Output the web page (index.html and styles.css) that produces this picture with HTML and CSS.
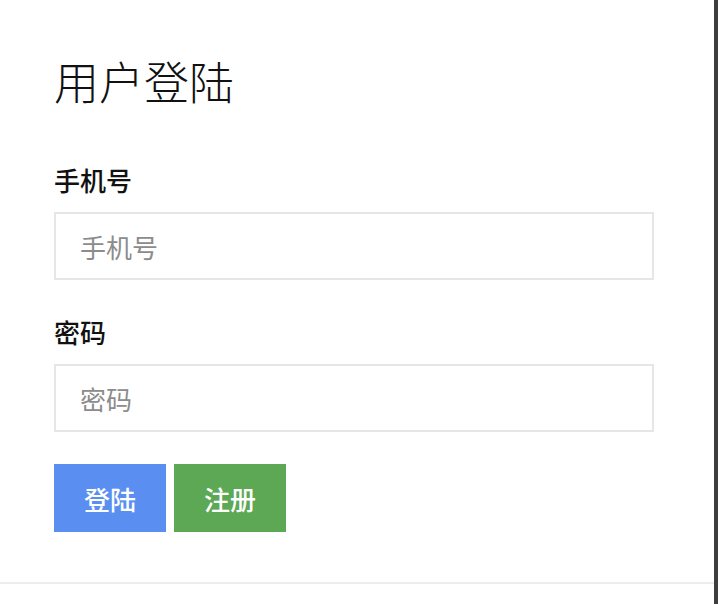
FILE: index.html
```html
<!DOCTYPE html>
<html lang="zh-CN">
<head>
  <meta charset="UTF-8">
  <meta name="viewport" content="width=device-width, initial-scale=1.0">
  <title>用户登陆</title>
  <link rel="stylesheet" href="styles.css">
</head>
<body>
  <div class="page">
    <div class="main">
      <div class="login">
        <h1 class="title">用户登陆</h1>
        <form class="form">
          <div class="field">
            <label for="phone" class="label">手机号</label>
            <input type="text" id="phone" class="input" placeholder="手机号">
          </div>
          <div class="field field-last">
            <label for="password" class="label">密码</label>
            <input type="password" id="password" class="input" placeholder="密码">
          </div>
          <div class="actions">
            <button type="button" class="btn btn-login">登陆</button>
            <button type="button" class="btn btn-register">注册</button>
          </div>
        </form>
      </div>
    </div>
    <div class="side"></div>
  </div>
</body>
</html>
```

FILE: styles.css
```css
* {
  margin: 0;
  padding: 0;
  box-sizing: border-box;
  font-family: "Noto Sans CJK SC", "Noto Sans", sans-serif;
}

body {
  background: #fff;
}

.page {
  display: flex;
  height: 604px;
}

.main {
  flex: 1;
}

.side {
  width: 4px;
  background: #3e3e3e;
}

.login {
  padding: 55px 54px 50px;
  border-bottom: 2px solid #ececec;
}

.title {
  font-size: 45px;
  font-weight: 300;
  line-height: 52px;
  color: #111;
  margin-bottom: 55px;
}

.field {
  margin-bottom: 34px;
}

.field-last {
  margin-bottom: 32px;
}

.label {
  display: block;
  font-size: 26px;
  font-weight: 500;
  line-height: 36px;
  color: #111;
  margin-bottom: 14px;
}

.input {
  display: block;
  width: 600px;
  height: 68px;
  border: 2px solid #e6e6e6;
  padding: 0 24px;
  font-size: 26px;
  color: #333;
  outline: none;
}

.input::placeholder {
  color: #8c8c8c;
}

.actions {
  display: flex;
  gap: 8px;
}

.btn {
  width: 112px;
  height: 68px;
  border: none;
  color: #fff;
  font-size: 26px;
  font-weight: 500;
  cursor: pointer;
}

.btn-login {
  background: #5a8ff1;
}

.btn-register {
  background: #5ca855;
}
```
